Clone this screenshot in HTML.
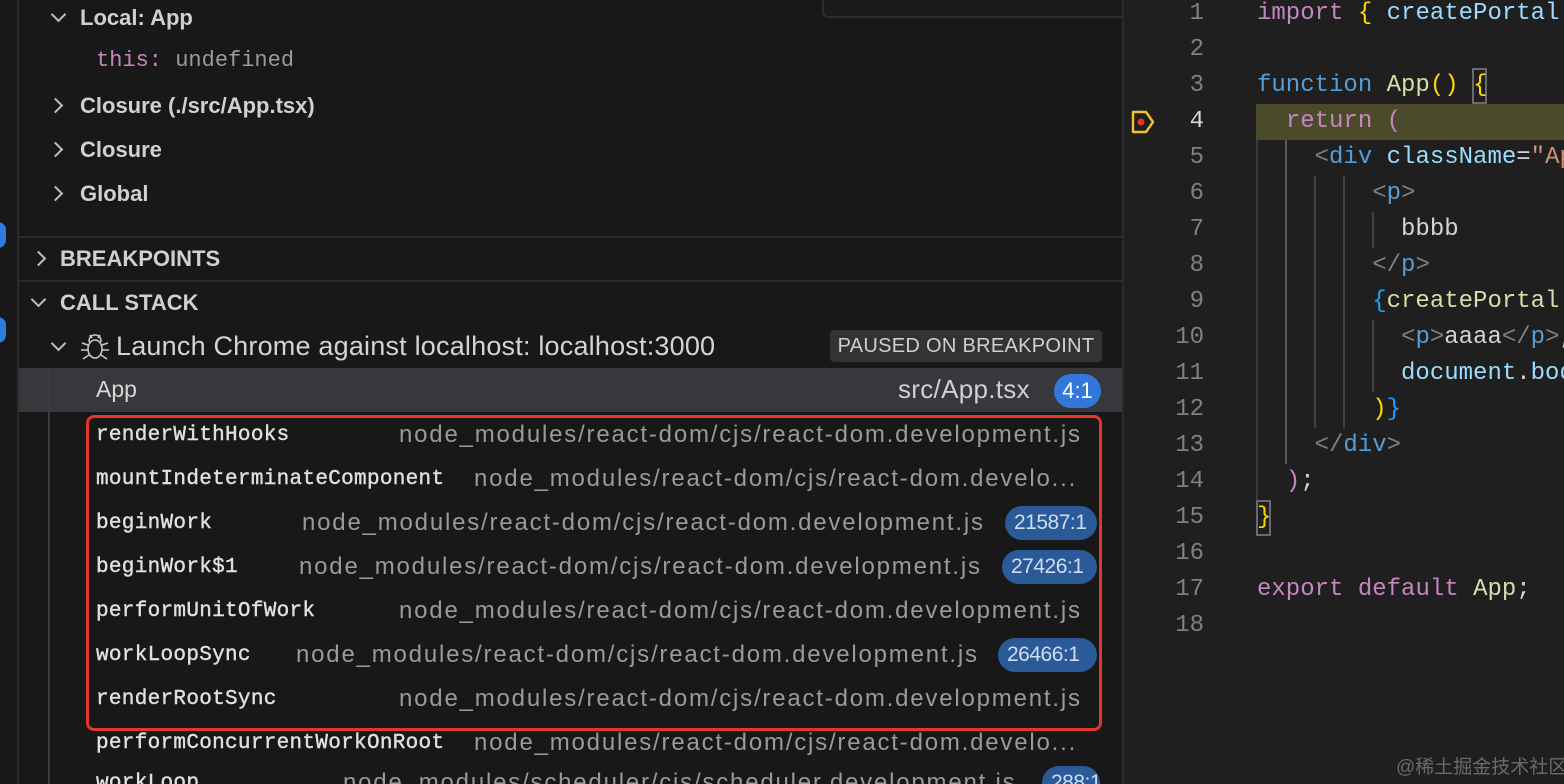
<!DOCTYPE html>
<html><head><meta charset="utf-8"><style>
*{margin:0;padding:0;box-sizing:border-box}
html{width:1564px;height:784px;overflow:hidden}
body{width:1564px;height:784px;overflow:hidden;background:#181818;position:relative;font-family:"Liberation Sans",sans-serif;color:#cccccc}
.a{position:absolute;white-space:nowrap}
.h{font-weight:bold;font-size:22px;color:#d0d0d0}
.chev{position:absolute;width:11px;height:11px;border-right:2px solid #c0c0c0;border-bottom:2px solid #c0c0c0}
.r{transform:rotate(-45deg)}
.d{transform:rotate(45deg)}
.fn{font-family:"Liberation Mono",monospace;font-size:21px;color:#e0e0e0;letter-spacing:0.3px;-webkit-text-stroke:0.4px #e0e0e0}
.pt{font-size:24px;color:#9a9a9a;letter-spacing:1.8px}
.bd{position:absolute;height:34px;border-radius:17px;background:#2a5a98;color:#d0dcf0;font-size:21px;line-height:34px;padding-left:9px;white-space:nowrap;overflow:hidden;letter-spacing:-0.5px}
.code{font-family:"Liberation Mono",monospace;font-size:24px;line-height:36px}
.ln{position:absolute;left:1150px;width:54px;text-align:right;font-family:"Liberation Mono",monospace;font-size:24px;color:#808080;line-height:36px}
.k{color:#c586c0}.b{color:#569cd6}.f{color:#dcdcaa}.y{color:#ffd700}.g{color:#808080}.v{color:#9cdcfe}.s{color:#ce9178}.w{color:#d4d4d4}.bl{color:#179fff}
.ig{position:absolute;width:2px;background:#404040}
</style></head><body>
<div class="a" style="left:0;top:0;width:19px;height:784px;background:#181818;border-right:2px solid #2b2b2b"></div>
<div class="a" style="left:-10px;top:222px;width:16px;height:26px;border-radius:8px;background:#2f7ce0"></div>
<div class="a" style="left:-10px;top:317px;width:16px;height:26px;border-radius:8px;background:#2f7ce0"></div>
<div class="a" style="left:822px;top:-4px;width:362px;height:22px;border:2px solid #2e2e2e;border-radius:0 0 6px 6px;background:#1b1b1b"></div>
<div class="chev d" style="left:53px;top:9px"></div>
<div class="a h" style="left:80px;top:5px">Local: App</div>
<div class="a" style="left:96px;top:48px;font-family:'Liberation Mono',monospace;font-size:22px"><span style="color:#c586c0">this:</span> <span style="color:#9a9a9a">undefined</span></div>
<div class="chev r" style="left:50px;top:100px"></div>
<div class="a h" style="left:80px;top:93px">Closure (./src/App.tsx)</div>
<div class="chev r" style="left:50px;top:144px"></div>
<div class="a h" style="left:80px;top:137px">Closure</div>
<div class="chev r" style="left:50px;top:188px"></div>
<div class="a h" style="left:80px;top:181px">Global</div>
<div class="a" style="left:19px;top:236px;width:1104px;height:2px;background:#2b2b2b"></div>
<div class="chev r" style="left:33px;top:253px"></div>
<div class="a h" style="left:60px;top:246px">BREAKPOINTS</div>
<div class="a" style="left:19px;top:280px;width:1104px;height:2px;background:#2b2b2b"></div>
<div class="chev d" style="left:33px;top:294px"></div>
<div class="a h" style="left:60px;top:290px">CALL STACK</div>
<div class="chev d" style="left:53px;top:338px"></div>
<svg class="a" style="left:80px;top:331px" width="30" height="32" viewBox="0 0 30 32" fill="none" stroke="#c8c8c8" stroke-width="1.6"><path d="M9 11 Q9 4 15 4 Q21 4 21 11"/><ellipse cx="15" cy="18" rx="7" ry="9"/><path d="M10 4 L12 7 M20 4 L18 7 M2 12 L8 14 M28 12 L22 14 M1 19 L8 19 M29 19 L22 19 M3 28 L9 24 M27 28 L21 24"/></svg>
<div class="a" style="left:116px;top:331px;font-size:27px;color:#d4d4d4;letter-spacing:0.2px">Launch Chrome against localhost: localhost:3000</div>
<div class="a" style="left:830px;top:330px;width:272px;height:32px;background:#333335;border-radius:4px;font-size:20px;line-height:32px;text-align:center;color:#d0d0d0;letter-spacing:.3px">PAUSED ON BREAKPOINT</div>
<div class="a" style="left:19px;top:368px;width:1104px;height:44px;background:#37373c"></div>
<div class="ig" style="left:48px;top:368px;height:416px;background:#3c3c3c"></div>
<div class="a" style="left:96px;top:376px;font-size:23px;color:#d8d8d8">App</div>
<div class="a" style="left:898px;top:374px;font-size:26px;color:#d0d0d0;letter-spacing:0.3px">src/App.tsx</div>
<div class="a" style="left:1054px;top:374px;width:47px;height:34px;border-radius:17px;background:#3277d9;color:#fff;font-size:22px;line-height:34px;text-align:center">4:1</div>
<div class="a fn" style="left:96px;top:424px">renderWithHooks</div>
<div class="a pt" style="left:399px;top:421px">node_modules/react-dom/cjs/react-dom.development.js</div>
<div class="a fn" style="left:96px;top:468px">mountIndeterminateComponent</div>
<div class="a pt" style="left:474px;top:465px">node_modules/react-dom/cjs/react-dom.develo...</div>
<div class="a fn" style="left:96px;top:512px">beginWork</div>
<div class="a pt" style="left:302px;top:509px">node_modules/react-dom/cjs/react-dom.development.js</div>
<div class="bd" style="left:1005px;top:506px;width:92px">21587:1</div>
<div class="a fn" style="left:96px;top:556px">beginWork$1</div>
<div class="a pt" style="left:299px;top:553px">node_modules/react-dom/cjs/react-dom.development.js</div>
<div class="bd" style="left:1002px;top:550px;width:95px">27426:1</div>
<div class="a fn" style="left:96px;top:600px">performUnitOfWork</div>
<div class="a pt" style="left:399px;top:597px">node_modules/react-dom/cjs/react-dom.development.js</div>
<div class="a fn" style="left:96px;top:644px">workLoopSync</div>
<div class="a pt" style="left:296px;top:641px">node_modules/react-dom/cjs/react-dom.development.js</div>
<div class="bd" style="left:998px;top:638px;width:99px">26466:1</div>
<div class="a fn" style="left:96px;top:688px">renderRootSync</div>
<div class="a pt" style="left:399px;top:685px">node_modules/react-dom/cjs/react-dom.development.js</div>
<div class="a fn" style="left:96px;top:732px">performConcurrentWorkOnRoot</div>
<div class="a pt" style="left:474px;top:729px">node_modules/react-dom/cjs/react-dom.develo...</div>
<div class="a fn" style="left:96px;top:772px">workLoop</div>
<div class="a pt" style="left:343px;top:769px">node_modules/scheduler/cjs/scheduler.development.js</div>
<div class="bd" style="left:1042px;top:766px;width:58px">288:1</div>
<div class="a" style="left:86px;top:415px;width:1016px;height:316px;border:3px solid #e3352a;border-radius:8px"></div>
<div class="a" style="left:1122px;top:0;width:442px;height:784px;background:#1f1f1f;border-left:2px solid #2b2b2b"></div>
<div class="a" style="left:1256px;top:104px;width:308px;height:36px;background:#4b4a2b"></div>
<svg class="a" style="left:1131px;top:110px" width="26" height="24" viewBox="0 0 26 24"><path d="M2 2 H15 L22 12 L15 22 H2 Z" fill="none" stroke="#f2c230" stroke-width="2.4" stroke-linejoin="round"/><circle cx="10" cy="12" r="3.5" fill="#e3352a"/></svg>
<div class="ln" style="top:-4px">1<br>2<br>3<br><span style="color:#d8d8d8">4</span><br>5<br>6<br>7<br>8<br>9<br>10<br>11<br>12<br>13<br>14<br>15<br>16<br>17<br>18</div>
<div class="ig" style="left:1256px;top:140px;height:360px;background:#3a3a3a"></div>
<div class="ig" style="left:1285px;top:140px;height:324px;background:#5a5a5a"></div>
<div class="ig" style="left:1314px;top:176px;height:252px"></div>
<div class="ig" style="left:1343px;top:176px;height:252px"></div>
<div class="ig" style="left:1372px;top:212px;height:36px"></div>
<div class="ig" style="left:1372px;top:320px;height:72px"></div>
<div class="a" style="left:1472px;top:68px;width:15px;height:36px;border:2px solid #6a6a6a"></div>
<div class="a" style="left:1256px;top:500px;width:15px;height:36px;border:2px solid #6a6a6a"></div>
<div class="a code" style="left:1257px;top:-4px;color:#d4d4d4"><span class="k">import</span> <span class="y">{</span> <span class="v">createPortal</span><br><br><span class="b">function</span> <span class="f">App</span><span class="y">()</span> <span class="y">{</span><br>&nbsp;&nbsp;<span class="k">return</span> <span class="k">(</span><br>&nbsp;&nbsp;&nbsp;&nbsp;<span class="g">&lt;</span><span class="b">div</span> <span class="v">className</span><span class="w">=</span><span class="s">"App"</span><br>&nbsp;&nbsp;&nbsp;&nbsp;&nbsp;&nbsp;&nbsp;&nbsp;<span class="g">&lt;</span><span class="b">p</span><span class="g">&gt;</span><br>&nbsp;&nbsp;&nbsp;&nbsp;&nbsp;&nbsp;&nbsp;&nbsp;&nbsp;&nbsp;bbbb<br>&nbsp;&nbsp;&nbsp;&nbsp;&nbsp;&nbsp;&nbsp;&nbsp;<span class="g">&lt;/</span><span class="b">p</span><span class="g">&gt;</span><br>&nbsp;&nbsp;&nbsp;&nbsp;&nbsp;&nbsp;&nbsp;&nbsp;<span class="bl">{</span><span class="f">createPortal</span><br>&nbsp;&nbsp;&nbsp;&nbsp;&nbsp;&nbsp;&nbsp;&nbsp;&nbsp;&nbsp;<span class="g">&lt;</span><span class="b">p</span><span class="g">&gt;</span>aaaa<span class="g">&lt;/</span><span class="b">p</span><span class="g">&gt;</span>,<br>&nbsp;&nbsp;&nbsp;&nbsp;&nbsp;&nbsp;&nbsp;&nbsp;&nbsp;&nbsp;<span class="v">document</span>.<span class="v">body</span><br>&nbsp;&nbsp;&nbsp;&nbsp;&nbsp;&nbsp;&nbsp;&nbsp;<span class="y">)</span><span class="bl">}</span><br>&nbsp;&nbsp;&nbsp;&nbsp;<span class="g">&lt;/</span><span class="b">div</span><span class="g">&gt;</span><br>&nbsp;&nbsp;<span class="k">)</span>;<br><span class="y">}</span><br><br><span class="k">export</span> <span class="k">default</span> <span class="f">App</span>;<br></div>
<div class="a" style="left:1396px;top:752px;font-family:'Liberation Sans','Noto Sans CJK SC',sans-serif;font-size:19px;color:#6a6a6a">@稀土掘金技术社区</div>
</body></html>
